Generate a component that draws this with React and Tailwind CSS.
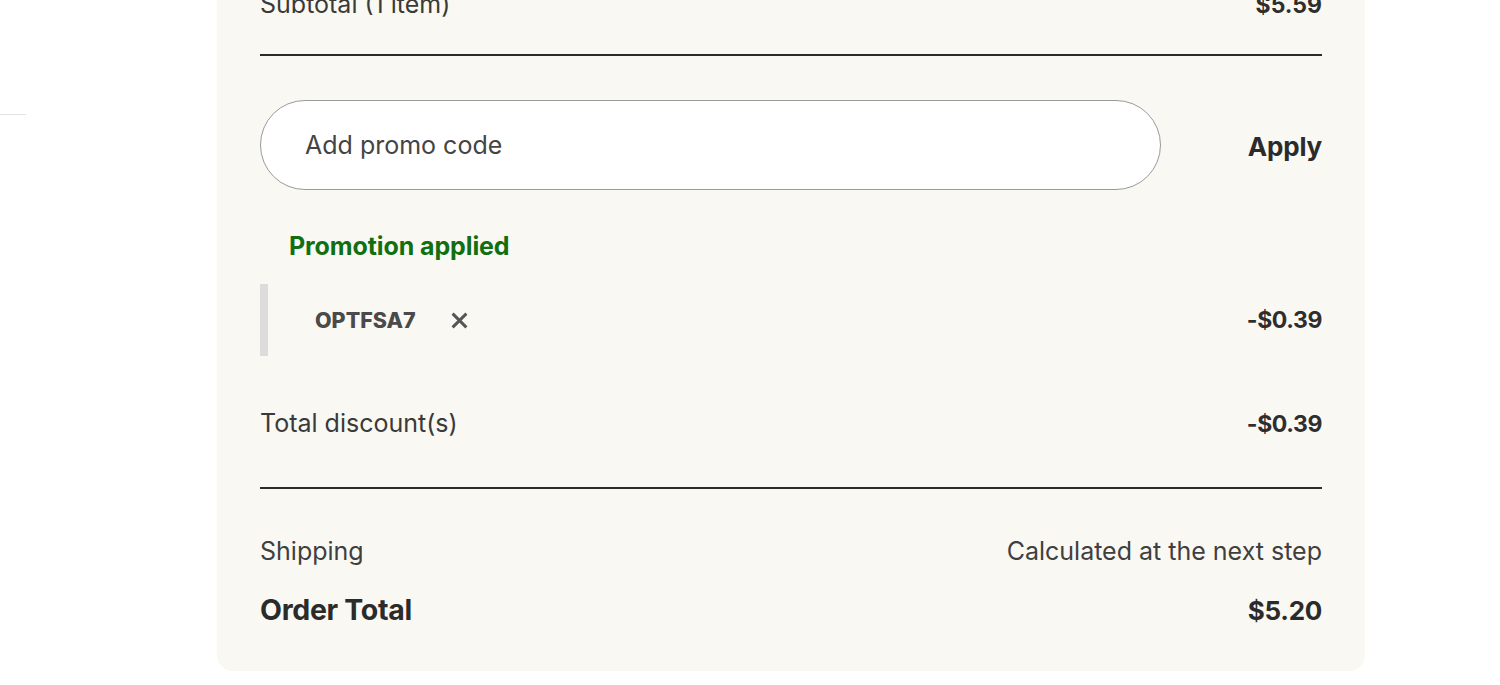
import React, { useState } from 'react';

const PROMOS = [{ code: 'OPTFSA7', amount: '-$0.39' }];

const Row = ({ label, value, className = '', valueClass = '' }) => (
  <div className={`flex items-center justify-between ${className}`}>
    <span>{label}</span>
    <span className={valueClass}>{value}</span>
  </div>
);

export default function App() {
  const [code, setCode] = useState('');

  return (
    <div className="min-h-screen w-full overflow-hidden bg-white text-[#2e2e2e] font-['Inter',sans-serif]">
      <div className="flex items-start">
        {/* left column edge */}
        <div className="w-[217px] shrink-0">
          <div className="mt-[114px] h-px w-[26px] bg-[#e2e2e2]" />
        </div>

        {/* Summary panel */}
        <section className="-mt-[11px] w-[1148px] shrink-0 rounded-b-[16px] bg-[#f9f8f3] px-[43px] pb-[44px]">
          <Row
            label="Subtotal (1 item)"
            value="$5.59"
            className="h-[32px] text-[25px] text-[#3a3a3a]"
            valueClass="font-bold text-[23px] text-[#2e2e2e]"
          />
          <div className="mt-[33px] h-[2px] bg-[#2b2b2b]" />

          <div className="mt-[44px] flex items-center gap-[86px]">
            <input
              value={code}
              onChange={e => setCode(e.target.value)}
              placeholder="Add promo code"
              className="h-[90px] w-[901px] rounded-full border border-[#9a9a9a] bg-white px-[44px] text-[25px] text-[#333] placeholder:text-[#444] outline-none"
            />
            <button className="ml-auto mt-[2px] text-[26px] font-bold tracking-[-0.2px] text-[#2b2b2b]">Apply</button>
          </div>

          <p className="mt-[41px] pl-[29px] text-[25px] leading-[30px] font-bold tracking-[-0.1px] text-[#106f10]">
            Promotion applied
          </p>

          {PROMOS.map(p => (
            <div key={p.code} className="mt-[23px] flex h-[72px] items-center border-l-[8px] border-[#dcdcdc]">
              <span className="ml-[47px] text-[21.5px] font-extrabold text-[#4a4a4a]">{p.code}</span>
              <button aria-label="Remove promo" className="ml-[35px] text-[#555]">
                <svg width="17" height="17" viewBox="0 0 16 16" fill="none" stroke="currentColor" strokeWidth="2.8" strokeLinecap="square">
                  <path d="M2.5 2.5l11 11M13.5 2.5l-11 11" />
                </svg>
              </button>
              <span className="ml-auto text-[23px] font-bold tracking-[-0.4px] text-[#2e2e2e]">{p.amount}</span>
            </div>
          ))}

          <Row
            label="Total discount(s)"
            value="-$0.39"
            className="mt-[53px] h-[30px] text-[25px] text-[#3a3a3a]"
            valueClass="font-bold text-[23px] tracking-[-0.4px] text-[#2e2e2e]"
          />
          <div className="mt-[48px] h-[2px] bg-[#2b2b2b]" />

          <Row
            label="Shipping"
            value="Calculated at the next step"
            className="mt-[48px] h-[30px] text-[25px] text-[#3f3f3f]"
          />
          <Row
            label="Order Total"
            value="$5.20"
            className="mt-[26px] h-[34px] text-[28.5px] font-bold tracking-[-0.3px] text-[#2b2b2b]"
            valueClass="text-[26px]"
          />
        </section>
      </div>
    </div>
  );
}
